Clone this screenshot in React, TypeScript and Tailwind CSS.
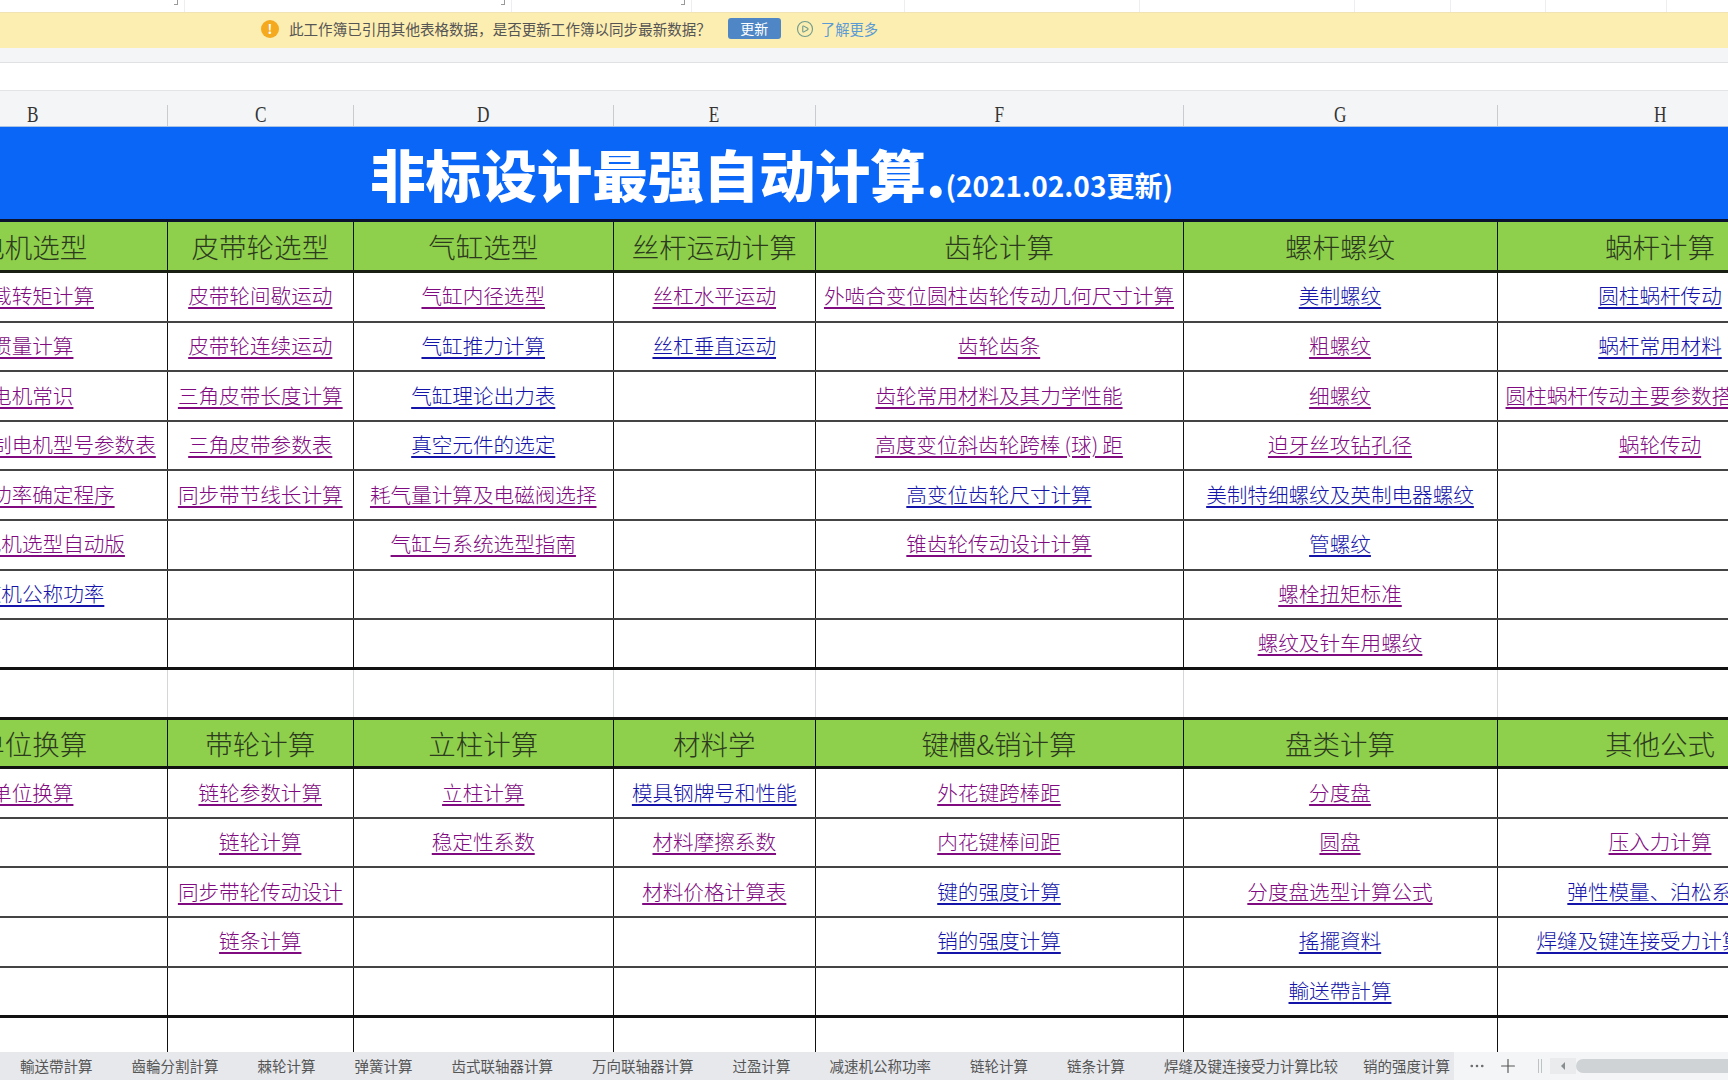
import React from 'react'
import { CirclePlay, Ellipsis, Plus } from 'lucide-react'

type Link = [string, 'p' | 'b'] | null

const font = { fontFamily: '"Noto Sans CJK SC", "Liberation Sans", sans-serif' }
const columnGrid = 'grid grid-cols-[270.5px_185.5px_260.5px_201.5px_368px_314px_326px] -ml-[102.5px] w-[1926px]'

const letters = ['B', 'C', 'D', 'E', 'F', 'G', 'H']

const topHeads = ['电机选型', '皮带轮选型', '气缸选型', '丝杆运动计算', '齿轮计算', '螺杆螺纹', '蜗杆计算']
const bottomHeads = ['单位换算', '带轮计算', '立柱计算', '材料学', '键槽&销计算', '盘类计算', '其他公式']

const topRows: Link[][] = [
  [['负载转矩计算', 'p'], ['皮带轮间歇运动', 'p'], ['气缸内径选型', 'p'], ['丝杠水平运动', 'p'], ['外啮合变位圆柱齿轮传动几何尺寸计算', 'p'], ['美制螺纹', 'b'], ['圆柱蜗杆传动', 'b']],
  [['惯量计算', 'p'], ['皮带轮连续运动', 'p'], ['气缸推力计算', 'b'], ['丝杠垂直运动', 'b'], ['齿轮齿条', 'p'], ['粗螺纹', 'p'], ['蜗杆常用材料', 'b']],
  [['电机常识', 'p'], ['三角皮带长度计算', 'p'], ['气缸理论出力表', 'b'], null, ['齿轮常用材料及其力学性能', 'p'], ['细螺纹', 'p'], ['圆柱蜗杆传动主要参数搭配及计算', 'p']],
  [['减速器控制电机型号参数表', 'p'], ['三角皮带参数表', 'p'], ['真空元件的选定', 'b'], null, ['高度变位斜齿轮跨棒\u2009(球)\u2009距', 'p'], ['迫牙丝攻钻孔径', 'p'], ['蜗轮传动', 'p']],
  [['电机功率确定程序', 'p'], ['同步带节线长计算', 'p'], ['耗气量计算及电磁阀选择', 'p'], null, ['高变位齿轮尺寸计算', 'b'], ['美制特细螺纹及英制电器螺纹', 'b'], null],
  [['步进电机选型自动版', 'p'], null, ['气缸与系统选型指南', 'p'], null, ['锥齿轮传动设计计算', 'p'], ['管螺纹', 'b'], null],
  [['减速机公称功率', 'b'], null, null, null, null, ['螺栓扭矩标准', 'p'], null],
  [null, null, null, null, null, ['螺纹及针车用螺纹', 'p'], null],
]

const bottomRows: Link[][] = [
  [['单位换算', 'p'], ['链轮参数计算', 'p'], ['立柱计算', 'p'], ['模具钢牌号和性能', 'b'], ['外花键跨棒距', 'p'], ['分度盘', 'p'], null],
  [null, ['链轮计算', 'p'], ['稳定性系数', 'p'], ['材料摩擦系数', 'p'], ['内花键棒间距', 'p'], ['圆盘', 'p'], ['压入力计算', 'p']],
  [null, ['同步带轮传动设计', 'p'], null, ['材料价格计算表', 'p'], ['键的强度计算', 'b'], ['分度盘选型计算公式', 'p'], ['弹性模量、泊松系数', 'b']],
  [null, ['链条计算', 'p'], null, null, ['销的强度计算', 'b'], ['搖擺資料', 'b'], ['焊缝及键连接受力计算比较', 'b']],
  [null, null, null, null, null, ['輸送帶計算', 'b'], null],
]

const tabs = ['輸送帶計算', '齒輪分割計算', '棘轮计算', '弹簧计算', '齿式联轴器计算', '万向联轴器计算', '过盈计算', '减速机公称功率', '链轮计算', '链条计算', '焊缝及键连接受力计算比较', '销的强度计算']

const stripCells = [185, 327, 180, 213, 235, 215, 96, 95, 121]

const HeadRow = ({ heads, tall }: { heads: string[]; tall?: boolean }) => (
  <div className={`${columnGrid} ${tall ? 'h-[48px]' : 'h-[46px]'} bg-[#8ecf4c]`}>
    {heads.map(h => (
      <div key={h} className="flex items-center justify-center pt-[1px] border-r border-[#111] text-[27.5px] font-light text-[#2c3a1e] whitespace-nowrap">
        {h}
      </div>
    ))}
  </div>
)

const LinkRow = ({ cells, last }: { cells: Link[]; last?: boolean }) => (
  <div className={`${columnGrid} ${last ? 'h-[50px] border-b-[3px] border-[#111]' : 'h-[49.6px] border-b-2 border-[#444]'}`}>
    {cells.map((c, i) => (
      <div key={i} className="flex items-center justify-center pb-[2px] border-r border-[#111]">
        {c && (
          <span className={`text-[20.6px] font-light whitespace-nowrap underline underline-offset-[3px] ${c[1] === 'p' ? 'text-[#800a80]' : 'text-[#1414a8]'}`}>
            {c[0]}
          </span>
        )}
      </div>
    ))}
  </div>
)

export default function App() {
  return (
    <div className="w-[1728px] h-[1080px] overflow-hidden flex flex-col bg-white" style={font}>
      {/* 顶部工具栏残留 */}
      <div className="h-[12px] flex shrink-0">
        {stripCells.map((w, i) => (
          <div key={i} className="h-full flex justify-end border-r border-[#eceef0] pr-[6px]" style={{ width: w }}>
            {i < 3 && <span className="w-[4px] h-[5px] border-r border-b border-[#9a9a9a]" />}
          </div>
        ))}
      </div>

      {/* 更新提示条 */}
      <div className="h-[36px] shrink-0 flex items-center pl-[261px] pb-[4px] bg-[#fcedb0] border-t border-[#f1e3b4]">
        <div className="w-[18px] h-[18px] rounded-full bg-[#f4a91f] text-white text-[13px] font-bold flex items-center justify-center">!</div>
        <span className="ml-[10px] text-[14.55px] text-[#555555]">此工作簿已引用其他表格数据，是否更新工作簿以同步最新数据？</span>
        <button className="ml-[17px] w-[53px] h-[21px] rounded-[3px] bg-[#4f87c6] text-white text-[14px] flex items-center justify-center">更新</button>
        <CirclePlay className="ml-[15px] w-[18px] h-[18px] text-[#6f9c8e]" strokeWidth={1.5} />
        <span className="ml-[7px] text-[14.3px] text-[#5b9bd5]">了解更多</span>
      </div>

      <div className="h-[15px] shrink-0 bg-[#f3f5f6] border-b border-[#dfe1e2]" />
      <div className="h-[28px] shrink-0 bg-white border-b border-[#e2e4e6]" />

      {/* 列标题 */}
      <div className="h-[36px] shrink-0 pt-[14px] bg-[#f4f5f7] border-b border-[#a9c3e4]">
        <div className={`${columnGrid} h-[21px]`}>
          {letters.map(l => (
            <div key={l} className="flex items-center justify-center border-r border-[#c9cbce]">
              <span className="block text-[23px] leading-[21px] -mt-[3px] text-[#333333] scale-x-75" style={{ fontFamily: '"Liberation Serif", serif' }}>
                {l}
              </span>
            </div>
          ))}
        </div>
      </div>

      {/* 标题 */}
      <div className="h-[95px] shrink-0 flex items-baseline pl-[370px] pt-[7px] bg-[#0a66f7] border-b-[3px] border-[#0a1230] text-white font-black">
        <span className="text-[55.6px] leading-[78px]">非标设计最强自动计算.</span>
        <span className="text-[28px] font-bold">(2021.02.03更新)</span>
      </div>

      <HeadRow heads={topHeads} tall />
      <div className="h-[3px] shrink-0 bg-[#1a1f14]" />
      {topRows.map((r, i) => <LinkRow key={i} cells={r} last={i === topRows.length - 1} />)}

      {/* 空行 */}
      <div className={`${columnGrid} h-[47px] shrink-0`}>
        {letters.map(l => <div key={l} className="border-r border-[#d4d6d8]" />)}
      </div>
      <div className="h-[3px] shrink-0 bg-[#111]" />

      <HeadRow heads={bottomHeads} />
      <div className="h-[3px] shrink-0 bg-[#111]" />
      {bottomRows.map((r, i) => <LinkRow key={i} cells={r} last={i === bottomRows.length - 1} />)}

      <div className={`${columnGrid} flex-1 min-h-0`}>
        {letters.map(l => <div key={l} className="border-r border-[#111]" />)}
      </div>

      {/* 工作表标签栏 */}
      <div className="h-[28px] shrink-0 flex items-stretch">
        <div className="w-[1454px] shrink-0 flex items-center gap-[39px] pl-[20px] bg-[#e6e8ec] overflow-hidden">
          {tabs.map((t, i) => (
            <span key={t} className={`text-[14.5px] text-[#555555] whitespace-nowrap ${i === tabs.length - 1 ? '-ml-[14px]' : ''}`}>{t}</span>
          ))}
        </div>
        <div className="flex-1 flex items-center bg-[#f4f5f6] text-[#555555]">
          <Ellipsis className="ml-[14px] w-[18px] h-[18px] text-[#666666]" strokeWidth={1.5} />
          <Plus className="ml-[11px] w-[22px] h-[22px]" strokeWidth={1.25} />
          <span className="ml-[19px] w-[4px] h-[14px] border-x border-[#bfc2c5]" />
          <div className="ml-[8px] w-[26px] h-[16px] bg-[#e9ebed] flex items-center justify-center">
            <span className="w-0 h-0 border-y-[4px] border-y-transparent border-r-[4px] border-r-[#8a8d90]" />
          </div>
          <div className="flex-1 h-[14px] bg-[#cfd3d6] rounded-l-[7px]" />
        </div>
      </div>
    </div>
  )
}
